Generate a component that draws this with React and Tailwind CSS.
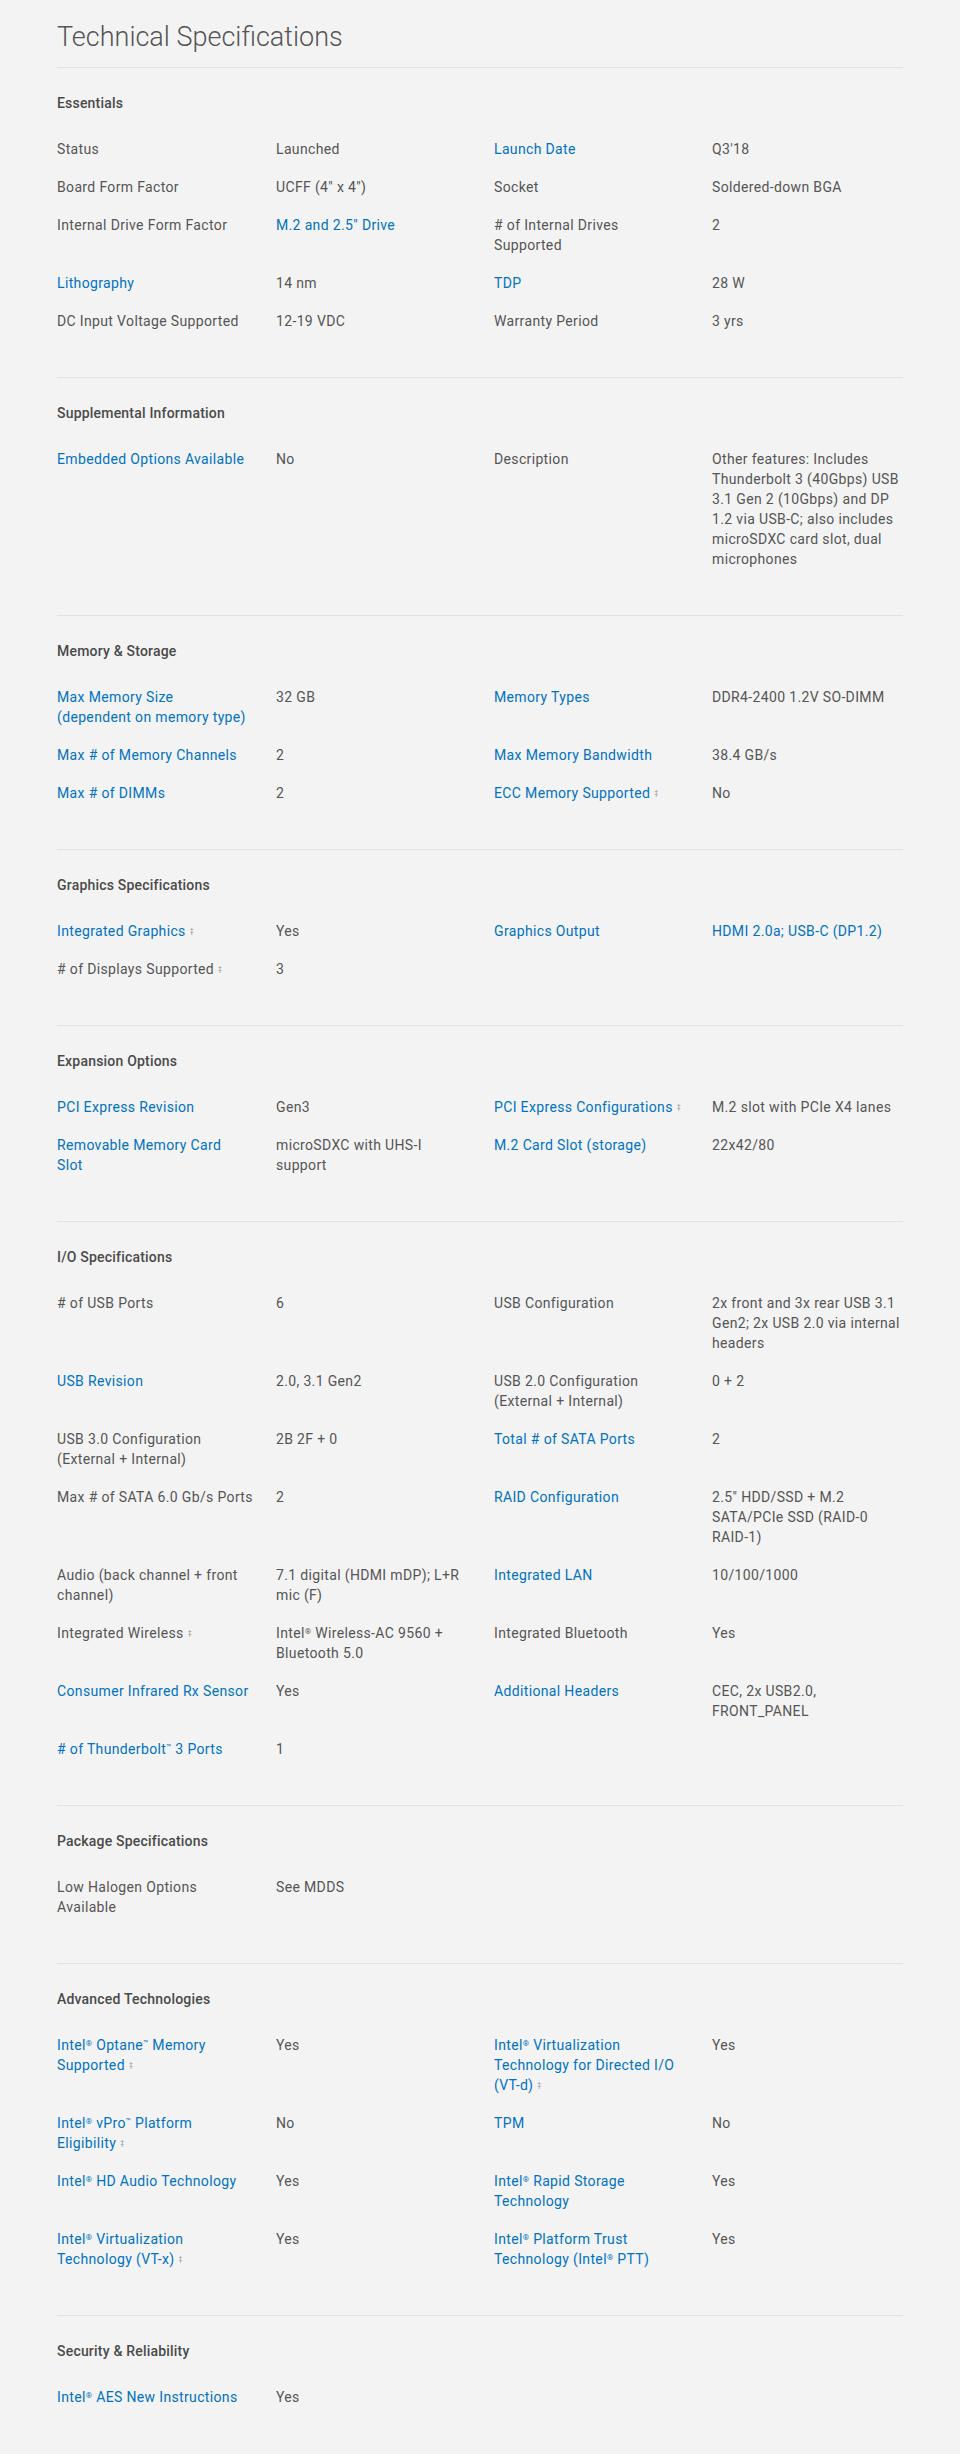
import React from "react";

// [label, value, label2, value2] — flags: "l" = link colour, "n" = footnote mark, "w" = keep on one line
const sections = [
  {
    title: "Essentials",
    rows: [
      ["Status", "Launched", ["Launch Date", "l"], "Q3'18"],
      ["Board Form Factor", 'UCFF (4" x 4")', "Socket", "Soldered-down BGA"],
      ["Internal Drive Form Factor", ['M.2 and 2.5" Drive', "l"], "# of Internal Drives Supported", "2"],
      [["Lithography", "l"], "14 nm", ["TDP", "l"], "28 W"],
      ["DC Input Voltage Supported", "12-19 VDC", "Warranty Period", "3 yrs"],
    ],
  },
  {
    title: "Supplemental Information",
    rows: [
      [
        ["Embedded Options Available", "l"],
        "No",
        "Description",
        "Other features: Includes Thunderbolt 3 (40Gbps) USB 3.1 Gen 2 (10Gbps) and DP 1.2 via USB-C; also includes microSDXC card slot, dual microphones",
      ],
    ],
  },
  {
    title: "Memory & Storage",
    rows: [
      [["Max Memory Size (dependent on memory type)", "l"], "32 GB", ["Memory Types", "l"], "DDR4-2400 1.2V SO-DIMM"],
      [["Max # of Memory Channels", "l"], "2", ["Max Memory Bandwidth", "l"], "38.4 GB/s"],
      [["Max # of DIMMs", "l"], "2", ["ECC Memory Supported", "ln"], "No"],
    ],
  },
  {
    title: "Graphics Specifications",
    rows: [
      [["Integrated Graphics", "ln"], "Yes", ["Graphics Output", "l"], ["HDMI 2.0a; USB-C (DP1.2)", "l"]],
      [["# of Displays Supported", "n"], "3"],
    ],
  },
  {
    title: "Expansion Options",
    rows: [
      [["PCI Express Revision", "l"], "Gen3", ["PCI Express Configurations", "ln"], "M.2 slot with PCIe X4 lanes"],
      [["Removable Memory Card Slot", "l"], "microSDXC with UHS-I support", ["M.2 Card Slot (storage)", "l"], "22x42/80"],
    ],
  },
  {
    title: "I/O Specifications",
    rows: [
      ["# of USB Ports", "6", "USB Configuration", "2x front and 3x rear USB 3.1 Gen2; 2x USB 2.0 via internal headers"],
      [["USB Revision", "l"], "2.0, 3.1 Gen2", "USB 2.0 Configuration (External + Internal)", "0 + 2"],
      ["USB 3.0 Configuration (External + Internal)", "2B 2F + 0", ["Total # of SATA Ports", "l"], "2"],
      [["Max # of SATA 6.0 Gb/s Ports", "w"], "2", ["RAID Configuration", "l"], '2.5" HDD/SSD + M.2 SATA/PCIe SSD (RAID-0 RAID-1)'],
      ["Audio (back channel + front channel)", "7.1 digital (HDMI mDP); L+R mic (F)", ["Integrated LAN", "l"], "10/100/1000"],
      [["Integrated Wireless", "n"], "Intel® Wireless-AC 9560 + Bluetooth 5.0", "Integrated Bluetooth", "Yes"],
      [["Consumer Infrared Rx Sensor", "l"], "Yes", ["Additional Headers", "l"], "CEC, 2x USB2.0, FRONT_PANEL"],
      [["# of Thunderbolt™ 3 Ports", "l"], "1"],
    ],
  },
  {
    title: "Package Specifications",
    rows: [["Low Halogen Options Available", "See MDDS"]],
  },
  {
    title: "Advanced Technologies",
    rows: [
      [["Intel® Optane™ Memory Supported", "ln"], "Yes", ["Intel® Virtualization Technology for Directed I/O (VT-d)", "ln"], "Yes"],
      [["Intel® vPro™ Platform Eligibility", "ln"], "No", ["TPM", "l"], "No"],
      [["Intel® HD Audio Technology", "l"], "Yes", ["Intel® Rapid Storage Technology", "l"], "Yes"],
      [["Intel® Virtualization Technology (VT-x)", "ln"], "Yes", ["Intel® Platform Trust Technology (Intel® PTT)", "l"], "Yes"],
    ],
  },
  {
    title: "Security & Reliability",
    rows: [[["Intel® AES New Instructions", "l"], "Yes"]],
  },
];

const fmt = (text) =>
  text.split(/([®™])/).map((part, i) =>
    part === "®" || part === "™" ? (
      <sup key={i} className="text-[8px]">
        {part}
      </sup>
    ) : (
      part
    )
  );

const Cell = ({ item, last }) => {
  const [text, flags = ""] = Array.isArray(item) ? item : [item, ""];
  const link = flags.includes("l");
  const note = flags.includes("n");
  const nowrap = flags.includes("w");
  return (
    <div
      className={`${last ? "" : "pr-[26px]"} ${link ? "text-[#0071c5]" : "text-[#555]"} ${
        nowrap ? "whitespace-nowrap" : ""
      }`}
    >
      {fmt(text)}
      {note && <sup className="ml-[4px] text-[7px] text-[#999]">‡</sup>}
    </div>
  );
};

const Section = ({ title, rows }) => (
  <div className="border-t border-[#e3e3e3] pt-[25px] pb-[37px]">
    <h3 className="text-[14px] leading-5 font-medium tracking-[0.2px] text-[#4a4a4a] mb-[17px]">{title}</h3>
    {rows.map((row, i) => (
      <div key={i} className="grid grid-cols-[219px_218px_218px_191px] py-[9px] text-[14px] leading-5 tracking-[0.35px]">
        {[0, 1, 2, 3].map((c) => (row[c] !== undefined ? <Cell key={c} item={row[c]} last={c === 3} /> : <div key={c} />))}
      </div>
    ))}
  </div>
);

export default function App() {
  return (
    <div className="min-h-screen bg-[#f3f3f3] font-['Roboto',sans-serif]">
      <div className="w-[846px] ml-[57px]">
        <h2 className="pt-5 mb-[13px] text-[27px] leading-[34px] font-light text-[#555]">Technical Specifications</h2>
        {sections.map((s) => (
          <Section key={s.title} title={s.title} rows={s.rows} />
        ))}
      </div>
    </div>
  );
}
